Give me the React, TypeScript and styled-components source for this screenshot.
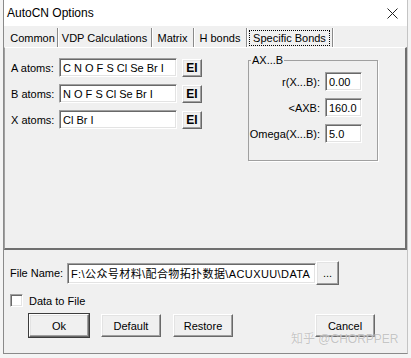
import styled, { createGlobalStyle } from 'styled-components';

const GlobalStyle = createGlobalStyle`
  html, body {
    margin: 0;
    padding: 0;
    background: #f4f4f4;
  }
  body {
    font-family: "Liberation Sans", "Noto Sans CJK SC", sans-serif;
    font-size: 11px;
    color: #000;
  }
`;

const Window = styled.div`
  position: relative;
  box-sizing: border-box;
  margin-left: 3px;
  width: 405px;
  height: 354px;
  background: #f0f0f0;
  border-left: 1px solid #8a8a8a;
  border-right: 1px solid #c4c4c4;
  border-bottom: 1px solid #8a8a8a;
  display: flex;
  flex-direction: column;
`;

const TitleBar = styled.div`
  height: 26px;
  background: #fff;
  display: flex;
  align-items: center;
  justify-content: space-between;
  padding: 0 9px 0 3px;
  font-size: 12px;
`;

const TabStrip = styled.div`
  display: flex;
  height: 19px;
  margin-top: 2px;
  padding-left: 4px;
`;

const Tab = styled.div<{ $w: number }>`
  box-sizing: border-box;
  width: ${({ $w }) => $w}px;
  height: 19px;
  display: flex;
  align-items: center;
  justify-content: center;
  border-right: 1px solid #8a8a8a;
  box-shadow: 1px 0 0 #fff;
  white-space: nowrap;
`;

const FocusLabel = styled.span`
  outline: 1px dotted #000;
  outline-offset: 1px;
  padding: 0 2px;
`;

const Panel = styled.div`
  box-sizing: border-box;
  height: 203px;
  border-left: 1px solid #a0a0a0;
  border-top: 1px solid #fff;
  border-right: 2px solid #6f6f6f;
  border-bottom: 2px solid #6f6f6f;
  display: flex;
  align-items: flex-start;
  padding: 6px 0 0 6px;
`;

const AtomColumn = styled.div`
  display: flex;
  flex-direction: column;
  gap: 7px;
  margin-top: 4px;
`;

const AtomRow = styled.div`
  display: flex;
  align-items: center;
  height: 19px;
`;

const RowLabel = styled.span<{ $w: number; $align?: string }>`
  width: ${({ $w }) => $w}px;
  text-align: ${({ $align }) => $align || 'left'};
  white-space: nowrap;
  flex-shrink: 0;
`;

const TextBox = styled.div<{ $w: number; $h?: number; $spacing?: number }>`
  box-sizing: border-box;
  width: ${({ $w }) => $w}px;
  height: ${({ $h }) => $h || 19}px;
  background: #fff;
  border: 1px solid;
  border-color: #a0a0a0 #fff #fff #a0a0a0;
  box-shadow: inset 1px 1px 0 #696969, inset -1px -1px 0 #e3e3e3;
  display: flex;
  align-items: center;
  padding-left: 3px;
  letter-spacing: ${({ $spacing }) => $spacing || 0}px;
  white-space: nowrap;
  overflow: hidden;
`;

const Button = styled.div<{ $w: number; $h: number; $default?: boolean }>`
  box-sizing: border-box;
  width: ${({ $w }) => $w}px;
  height: ${({ $h }) => $h}px;
  background: #f0f0f0;
  border: 1px solid;
  border-color: #fff #696969 #696969 #fff;
  box-shadow: inset -1px -1px 0 #a0a0a0, inset 1px 1px 0 #e3e3e3
    ${({ $default }) => ($default ? ', 0 0 0 1px #3c3c3c' : '')};
  display: flex;
  align-items: center;
  justify-content: center;
  flex-shrink: 0;
`;

const ElButton = styled(Button)`
  margin-left: 5px;
  font-weight: 700;
  font-size: 12px;
`;

const GroupBox = styled.fieldset`
  box-sizing: border-box;
  width: 130px;
  height: 107px;
  margin: 0 0 0 46px;
  padding: 0;
  border: 1px solid #a0a0a0;
  box-shadow: 1px 1px 0 #fff;

  legend {
    padding: 0 1px;
    margin-left: 2px;
    line-height: 13px;
  }
`;

const GroupRows = styled.div`
  display: flex;
  flex-direction: column;
  gap: 7px;
  margin-top: 5px;
`;

const GroupRow = styled.div`
  display: flex;
  align-items: center;
  gap: 5px;
  height: 19px;
`;

const FileRow = styled.div`
  display: flex;
  align-items: center;
  margin-top: 11px;
  padding-left: 6px;
  height: 24px;
`;

const CheckRow = styled.label`
  display: flex;
  align-items: center;
  gap: 6px;
  margin-top: 9px;
  padding-left: 6px;
  height: 13px;
`;

const CheckBox = styled.span`
  box-sizing: border-box;
  width: 13px;
  height: 13px;
  background: #fff;
  border: 1px solid;
  border-color: #a0a0a0 #fff #fff #a0a0a0;
  box-shadow: inset 1px 1px 0 #696969, inset -1px -1px 0 #e3e3e3;
`;

const ButtonRow = styled.div`
  display: flex;
  align-items: center;
  gap: 12px;
  margin-top: 7px;
  padding: 0 32px 0 25px;

  & > :last-child {
    margin-left: auto;
  }
`;

// faint site watermark sitting over the lower right corner
const Watermark = styled.div`
  position: absolute;
  left: 287px;
  top: 332px;
  font-size: 12px;
  line-height: 14px;
  color: rgba(150, 150, 150, 0.55);
  text-shadow: 0 0 1px #fff;
  white-space: nowrap;
  pointer-events: none;
`;

const tabs = [
  { name: 'Common', w: 50 },
  { name: 'VDP Calculations', w: 94 },
  { name: 'Matrix', w: 42 },
  { name: 'H bonds', w: 53 },
  { name: 'Specific Bonds', w: 86, active: true },
];

const atoms = [
  { label: 'A atoms:', value: 'C N O F S Cl Se Br I' },
  { label: 'B atoms:', value: 'N O F S Cl Se Br I' },
  { label: 'X atoms:', value: 'Cl Br I' },
];

const params = [
  { label: 'r(X...B):', value: '0.00' },
  { label: '<AXB:', value: '160.0' },
  { label: 'Omega(X...B):', value: '5.0' },
];

export default function App() {
  return (
    <>
      <GlobalStyle />
      <Window>
        <TitleBar>
          <span>AutoCN Options</span>
          <svg width="11" height="11" viewBox="0 0 11 11">
            <path d="M0.5 0.5 L10.5 10.5 M10.5 0.5 L0.5 10.5" stroke="#222" strokeWidth="1" />
          </svg>
        </TitleBar>

        <TabStrip>
          {tabs.map((t) => (
            <Tab key={t.name} $w={t.w}>
              {t.active ? <FocusLabel>{t.name}</FocusLabel> : t.name}
            </Tab>
          ))}
        </TabStrip>

        <Panel>
          <AtomColumn>
            {atoms.map((a) => (
              <AtomRow key={a.label}>
                <RowLabel $w={48}>{a.label}</RowLabel>
                <TextBox $w={118}>{a.value}</TextBox>
                <ElButton $w={20} $h={18}>EI</ElButton>
              </AtomRow>
            ))}
          </AtomColumn>

          <GroupBox>
            <legend>AX...B</legend>
            <GroupRows>
              {params.map((p) => (
                <GroupRow key={p.label}>
                  <RowLabel $w={71} $align="right">{p.label}</RowLabel>
                  <TextBox $w={37}>{p.value}</TextBox>
                </GroupRow>
              ))}
            </GroupRows>
          </GroupBox>
        </Panel>

        <FileRow>
          <RowLabel $w={57}>File Name:</RowLabel>
          <TextBox $w={249} $h={21} $spacing={0.4}>
            F:\公众号材料\配合物拓扑数据\ACUXUU\DATA
          </TextBox>
          <Button $w={23} $h={24}>...</Button>
        </FileRow>

        <CheckRow>
          <CheckBox />
          <span>Data to File</span>
        </CheckRow>

        <ButtonRow>
          <Button $w={60} $h={23} $default>Ok</Button>
          <Button $w={60} $h={23}>Default</Button>
          <Button $w={60} $h={23}>Restore</Button>
          <Button $w={60} $h={23}>Cancel</Button>
        </ButtonRow>

        <Watermark>知乎 @CHORPPER</Watermark>
      </Window>
    </>
  );
}
